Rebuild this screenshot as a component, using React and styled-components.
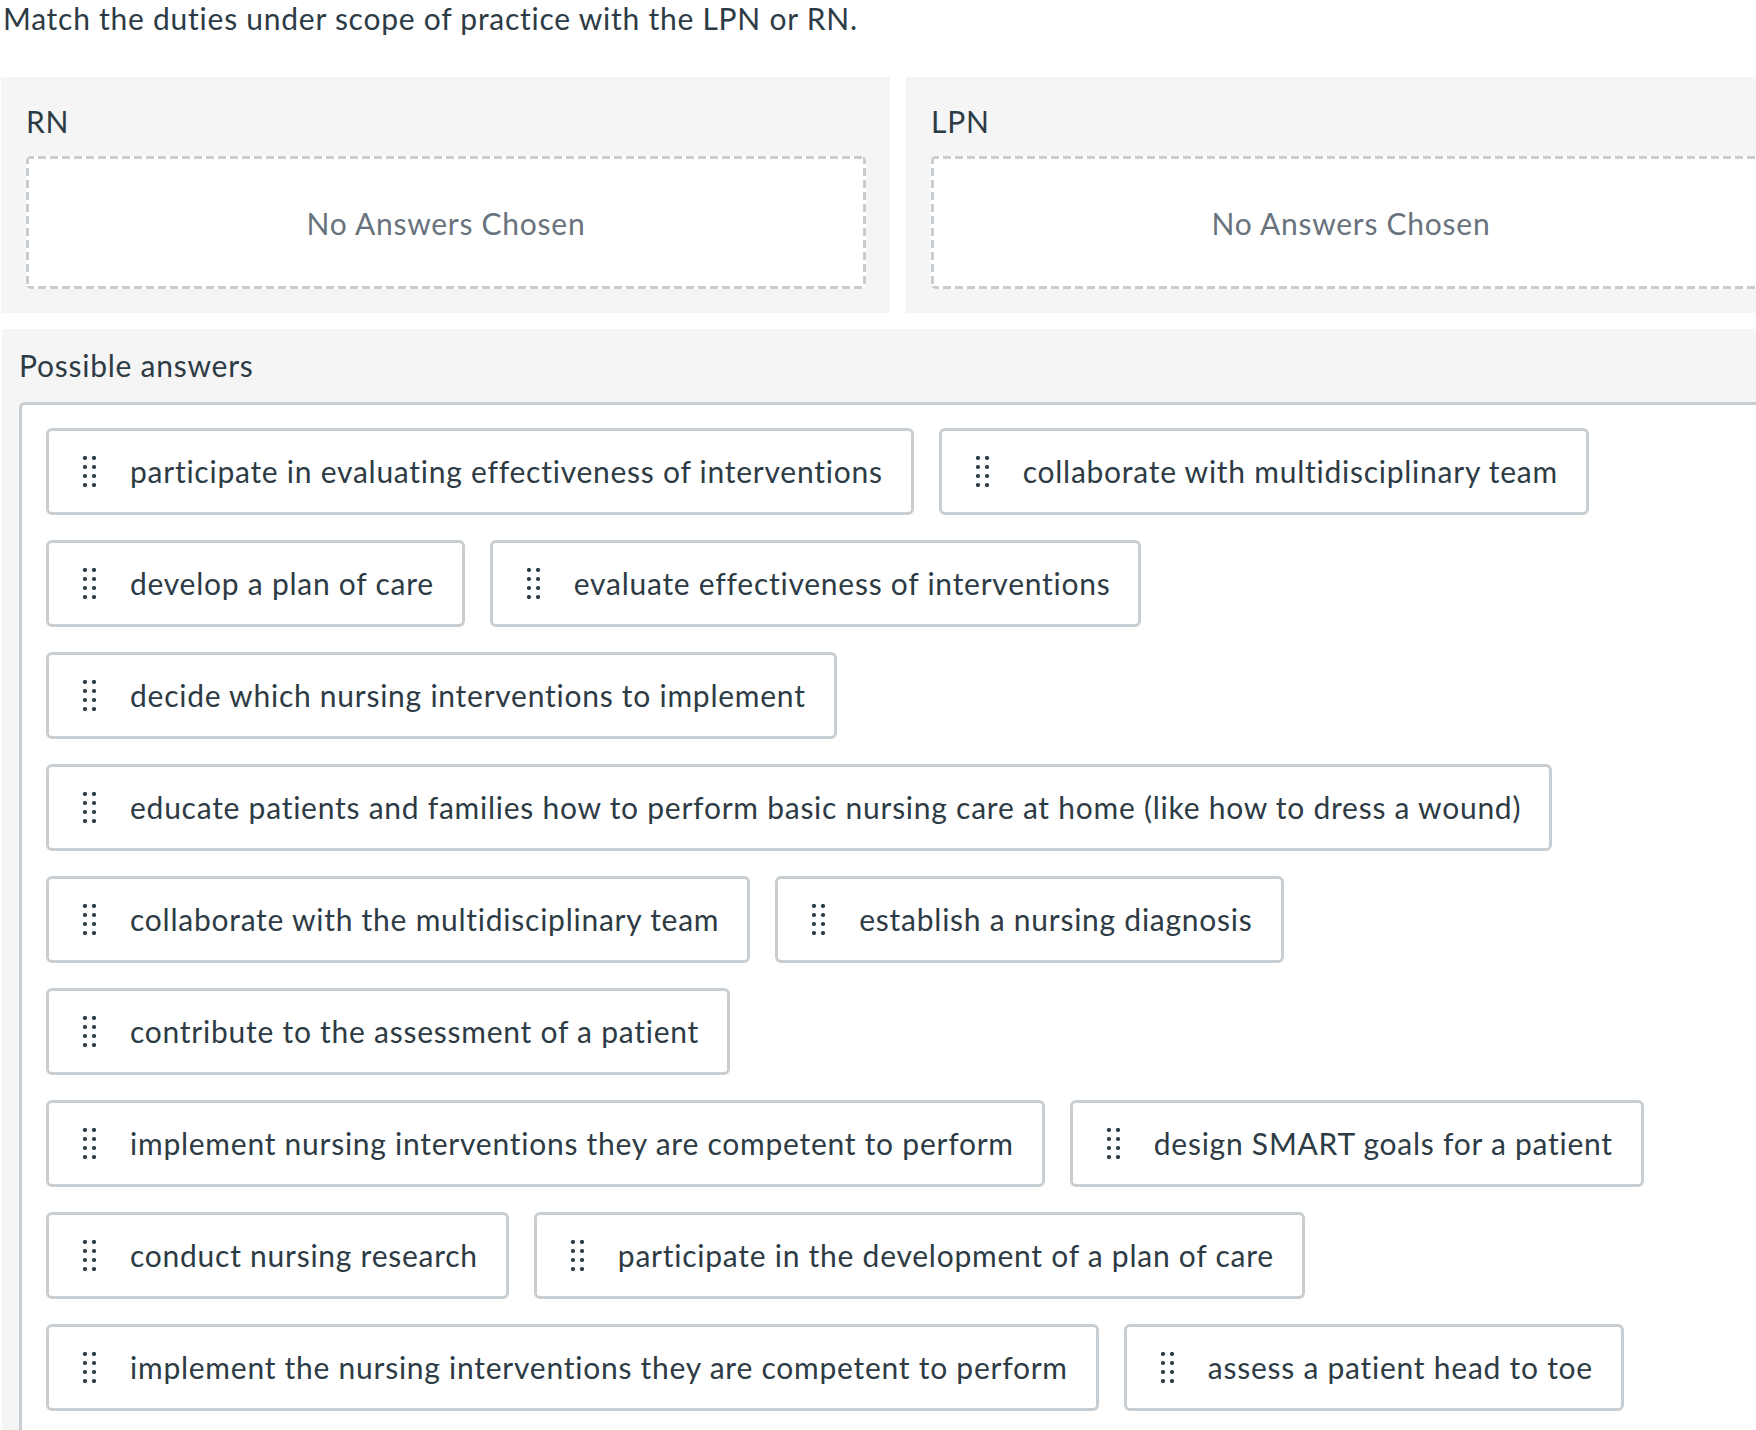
import React from 'react';
import styled, { createGlobalStyle } from 'styled-components';

const GlobalStyle = createGlobalStyle`
  html, body {
    margin: 0;
    padding: 0;
    overflow: hidden;
    background: #ffffff;
  }
  body {
    font-family: Lato, "Open Sans", "Liberation Sans", sans-serif;
    color: #2d3b45;
    letter-spacing: 0.75px;
  }
`;

const Page = styled.div`
  width: 1794px;
  padding-left: 1px;
`;

const Question = styled.p`
  margin: 0 0 41px 2px;
  font-size: 30px;
  line-height: 36px;
  color: #2d3b45;
`;

const Targets = styled.div`
  display: grid;
  grid-template-columns: 889px 889px;
  gap: 16px;
  margin-bottom: 16px;
`;

const TargetPanel = styled.div`
  background: #f5f5f5;
  padding: 26px 24px 24px 25px;
`;

const PanelLabel = styled.div`
  font-size: 30px;
  line-height: 36px;
  color: #2d3b45;
`;

const dash = '#c7cdd1';

const DropZone = styled.div`
  margin-top: 17px;
  height: 133px;
  border-radius: 5px;
  background:
    repeating-linear-gradient(90deg, ${dash} 0 8px, transparent 8px 12px) top left / 100% 3px no-repeat,
    repeating-linear-gradient(90deg, ${dash} 0 8px, transparent 8px 12px) bottom left / 100% 3px no-repeat,
    repeating-linear-gradient(180deg, ${dash} 0 8px, transparent 8px 12px) top left / 3px 100% no-repeat,
    repeating-linear-gradient(180deg, ${dash} 0 8px, transparent 8px 12px) top right / 3px 100% no-repeat,
    #ffffff;
  display: flex;
  align-items: center;
  justify-content: center;
  font-size: 30px;
  color: #68737d;
`;

const AnswersPanel = styled.div`
  background: #f5f5f5;
  margin: 0 14px 0 1px;
  padding: 18px 17px 20px 17px;
`;

const AnswersLabel = styled(PanelLabel)`
  margin-bottom: 19px;
`;

const AnswerBox = styled.div`
  background: #ffffff;
  border: 3px solid #c7cdd1;
  border-radius: 6px;
  padding: 23px 24px;
  display: flex;
  flex-wrap: wrap;
  gap: 25px;
`;

const Chip = styled.div`
  display: flex;
  align-items: center;
  gap: 34px;
  height: 87px;
  box-sizing: border-box;
  padding: 0 28px 0 34px;
  border: 3px solid #c7cdd1;
  border-radius: 6px;
  background: #ffffff;
  font-size: 30px;
  line-height: 45px;
  color: #2d3b45;
  white-space: nowrap;
`;

const Handle = () => (
  <svg width="13" height="31" viewBox="0 0 13 31" aria-hidden="true">
    {[2, 11, 20, 29].map((cy) =>
      [2, 11].map((cx) => (
        <circle key={`${cx}-${cy}`} cx={cx} cy={cy} r="2.1" fill="#2d3b45" />
      ))
    )}
  </svg>
);

const answers = [
  'participate in evaluating effectiveness of interventions',
  'collaborate with multidisciplinary team',
  'develop a plan of care',
  'evaluate effectiveness of interventions',
  'decide which nursing interventions to implement',
  'educate patients and families how to perform basic nursing care at home (like how to dress a wound)',
  'collaborate with the multidisciplinary team',
  'establish a nursing diagnosis',
  'contribute to the assessment of a patient',
  'implement nursing interventions they are competent to perform',
  'design SMART goals for a patient',
  'conduct nursing research',
  'participate in the development of a plan of care',
  'implement the nursing interventions they are competent to perform',
  'assess a patient head to toe'
];

const App = () => (
  <Page>
    <GlobalStyle />
    <Question>Match the duties under scope of practice with the LPN or RN.</Question>

    <Targets>
      {['RN', 'LPN'].map((label) => (
        <TargetPanel key={label}>
          <PanelLabel>{label}</PanelLabel>
          <DropZone>No Answers Chosen</DropZone>
        </TargetPanel>
      ))}
    </Targets>

    <AnswersPanel>
      <AnswersLabel>Possible answers</AnswersLabel>
      <AnswerBox>
        {answers.map((text) => (
          <Chip key={text}>
            <Handle />
            <span>{text}</span>
          </Chip>
        ))}
      </AnswerBox>
    </AnswersPanel>
  </Page>
);

export default App;
